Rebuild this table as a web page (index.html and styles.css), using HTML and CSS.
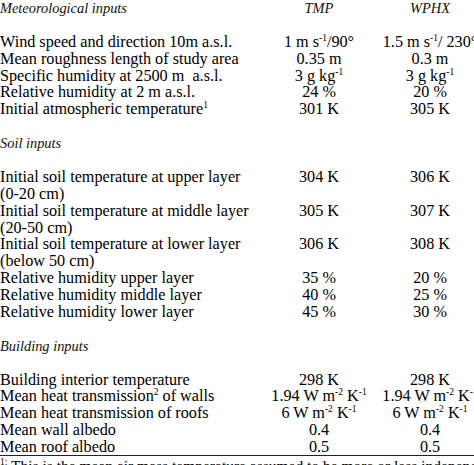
FILE: index.html
```html
<!DOCTYPE html>
<html>
<head>
<meta charset="utf-8">
<link rel="stylesheet" href="styles.css">
</head>
<body>
<div class="table">
  <div class="row head"><span class="label">Meteorological inputs</span><span class="val">TMP</span><span class="val">WPHX</span></div>
  <div class="row blank"></div>
  <div class="row"><span class="label">Wind speed and direction 10m a.s.l.</span><span class="val">1 m s<sup>-1</sup>/90°</span><span class="val">1.5 m s<sup>-1</sup>/ 230°</span></div>
  <div class="row"><span class="label">Mean roughness length of study area</span><span class="val">0.35 m</span><span class="val">0.3 m</span></div>
  <div class="row"><span class="label">Specific humidity at 2500 m&nbsp; a.s.l.</span><span class="val">3 g kg<sup>-1</sup></span><span class="val">3 g kg<sup>-1</sup></span></div>
  <div class="row"><span class="label">Relative humidity at 2 m a.s.l.</span><span class="val">24 %</span><span class="val">20 %</span></div>
  <div class="row"><span class="label">Initial atmospheric temperature<sup>1</sup></span><span class="val">301 K</span><span class="val">305 K</span></div>
  <div class="row blank"></div>
  <div class="row head"><span class="label">Soil inputs</span></div>
  <div class="row blank"></div>
  <div class="row"><span class="label">Initial soil temperature at upper layer</span><span class="val">304 K</span><span class="val">306 K</span></div>
  <div class="row"><span class="label">(0-20 cm)</span></div>
  <div class="row"><span class="label">Initial soil temperature at middle layer</span><span class="val">305 K</span><span class="val">307 K</span></div>
  <div class="row"><span class="label">(20-50 cm)</span></div>
  <div class="row"><span class="label">Initial soil temperature at lower layer</span><span class="val">306 K</span><span class="val">308 K</span></div>
  <div class="row"><span class="label">(below 50 cm)</span></div>
  <div class="row"><span class="label">Relative humidity upper layer</span><span class="val">35 %</span><span class="val">20 %</span></div>
  <div class="row"><span class="label">Relative humidity middle layer</span><span class="val">40 %</span><span class="val">25 %</span></div>
  <div class="row"><span class="label">Relative humidity lower layer</span><span class="val">45 %</span><span class="val">30 %</span></div>
  <div class="row blank"></div>
  <div class="row head"><span class="label">Building inputs</span></div>
  <div class="row blank"></div>
  <div class="row"><span class="label">Building interior temperature</span><span class="val">298 K</span><span class="val">298 K</span></div>
  <div class="row"><span class="label">Mean heat transmission<sup>2</sup> of walls</span><span class="val">1.94 W m<sup>-2</sup> K<sup>-1</sup></span><span class="val">1.94 W m<sup>-2</sup> K<sup>-1</sup></span></div>
  <div class="row"><span class="label">Mean heat transmission of roofs</span><span class="val">6 W m<sup>-2</sup> K<sup>-1</sup></span><span class="val">6 W m<sup>-2</sup> K<sup>-1</sup></span></div>
  <div class="row"><span class="label">Mean wall albedo</span><span class="val">0.4</span><span class="val">0.4</span></div>
  <div class="row last"><span class="label">Mean roof albedo</span><span class="val">0.5</span><span class="val">0.5</span></div>
  <div class="foot"><sup>1:</sup> This is the mean air mass temperature assumed to be more or less independent</div>
</div>
</body>
</html>
```
FILE: styles.css
```css
html, body {
  margin: 0;
  padding: 0;
  background: #fff;
  overflow: hidden;
}
body {
  width: 474px;
  height: 465px;
  font-family: "Liberation Serif", "Times New Roman", serif;
  font-size: 16.2px;
  color: #000;
}
.table {
  width: 490px;
}
.row {
  display: grid;
  grid-template-columns: 265px 108px 114px;
  height: 16.9px;
  line-height: 16.9px;
  white-space: nowrap;
}
.val {
  text-align: center;
}
.head {
  font-style: italic;
  font-size: 14.4px;
  color: #111;
}
sup {
  font-size: 9.5px;
  line-height: 0;
  vertical-align: 6px;
}
.last {
  box-sizing: border-box;
  border-bottom: 1px solid #222;
}
.foot {
  line-height: 18px;
  padding-top: 1px;
  white-space: nowrap;
  font-size: 15.5px;
}
```
